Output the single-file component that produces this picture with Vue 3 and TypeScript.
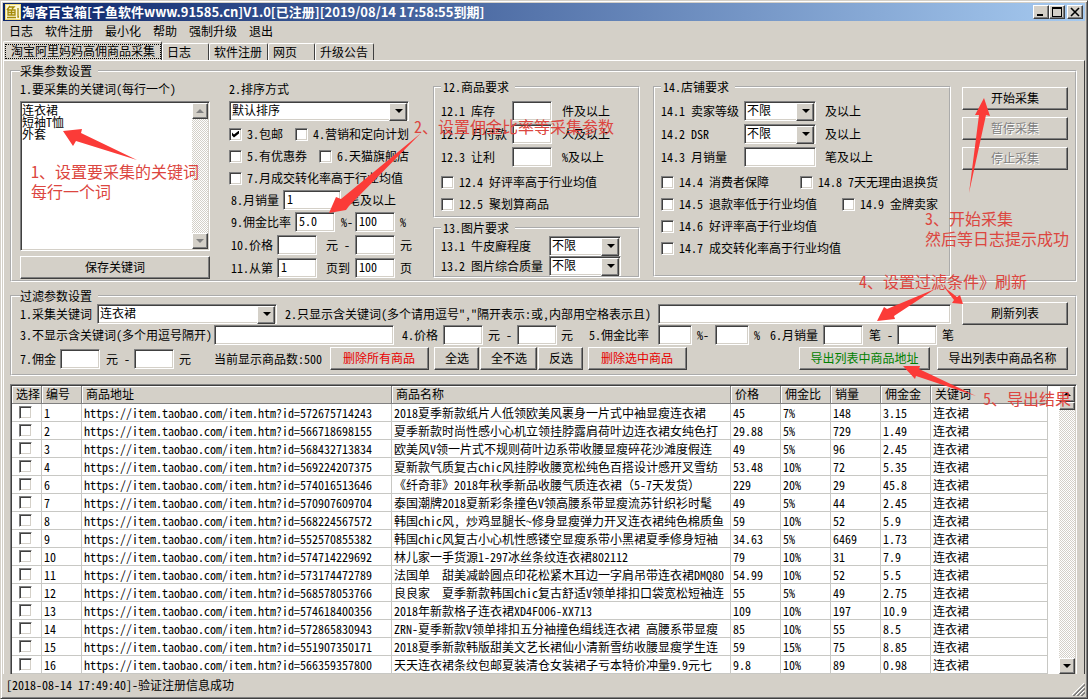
<script setup lang="ts">
import { ref } from 'vue'

interface Product {
  no: number
  id: string
  name: string
  price: string
  rate: string
  sales: string
  commission: string
  checked: boolean
}

const menus = ['日志', '软件注册', '最小化', '帮助', '强制升级', '退出']
const tabs = ['淘宝阿里妈妈高佣商品采集', '日志', '软件注册', '网页', '升级公告']
const activeTab = ref(0)

const keywords = ref('连衣裙\n短袖T恤\n外套')
const limits = ['不限']

const raw: [number, string, string, string, string, string, string][] = [
  [1, '572675714243', '2018夏季新款纸片人低领欧美风裹身一片式中袖显瘦连衣裙', '45', '7%', '148', '3.15'],
  [2, '566718698155', '夏季新款时尚性感小心机立领挂脖露肩荷叶边连衣裙女纯色打', '29.88', '5%', '729', '1.49'],
  [3, '568432713834', '欧美风V领一片式不规则荷叶边系带收腰显瘦碎花沙滩度假连', '49', '5%', '96', '2.45'],
  [4, '569224207375', '夏新款气质复古chic风挂脖收腰宽松纯色百搭设计感开叉雪纺', '53.48', '10%', '72', '5.35'],
  [6, '574016513646', '《纤奇菲》2018年秋季新品收腰气质连衣裙（5-7天发货）', '229', '20%', '29', '45.8'],
  [7, '570907609704', '泰国潮牌2018夏新彩条撞色V领高腰系带显瘦流苏针织衫时髦', '49', '5%', '44', '2.45'],
  [8, '568224567572', '韩国chic风, 炒鸡显腿长~修身显瘦弹力开叉连衣裙纯色棉质鱼', '59', '10%', '52', '5.9'],
  [9, '552570855382', '韩国chic风复古小心机性感镂空显瘦系带小黑裙夏季修身短袖', '34.63', '5%', '6469', '1.73'],
  [10, '574714229692', '林儿家一手货源1-297冰丝条纹连衣裙802112', '79', '10%', '31', '7.9'],
  [11, '573174472789', '法国单  甜美减龄圆点印花松紧木耳边一字肩吊带连衣裙DMQ80', '54.99', '10%', '52', '5.5'],
  [12, '568578053766', '良良家  夏季新款韩国chic复古舒适V领单排扣口袋宽松短袖连', '55', '5%', '49', '2.75'],
  [13, '574618400356', '2018年新款格子连衣裙XD4F006-XX713', '109', '10%', '197', '10.9'],
  [14, '572865830943', 'ZRN-夏季新款V领单排扣五分袖撞色缉线连衣裙 高腰系带显瘦', '85', '10%', '55', '8.5'],
  [15, '551907350171', '2018夏季新款韩版甜美文艺长裙仙小清新雪纺收腰显瘦学生连', '59', '15%', '75', '8.85'],
  [16, '566359357800', '天天连衣裙条纹包邮夏装清仓女装裙子亏本特价冲量9.9元七', '9.8', '10%', '89', '0.98'],
]
const products = ref<Product[]>(
  raw.map(([no, id, name, price, rate, sales, commission]) => ({
    no, id, name, price, rate, sales, commission, checked: false,
  })),
)
const headers = ['选择', '编号', '商品地址', '商品名称', '价格', '佣金比', '销量', '佣金金', '关键词']

// Full-width brackets keep their own width, apart from the half-width Latin text.
function pieces(name: string): { text: string; full: boolean }[] {
  return name
    .split(/([（）])/)
    .filter(Boolean)
    .map((text) => ({ text, full: /[（）]/.test(text) }))
}

function setAll(value: boolean) {
  products.value.forEach((p) => (p.checked = value))
}
function invert() {
  products.value.forEach((p) => (p.checked = !p.checked))
}
</script>

<template>
  <div class="window">
    <header class="titlebar">
      <svg class="app-icon" viewBox="0 0 16 16" aria-hidden="true">
        <rect width="16" height="16" fill="#f3dc74" />
        <rect x="1" y="1" width="14" height="14" fill="#fdf8d8" />
        <path d="M5 2 L2 6 M4 3 H9 L7 5 M3 6 H10 V11 H3 Z M3 8.5 H10 M6.5 6 V11 M2 13.5 H11 M13 4 V13 H14" fill="none" stroke="#a58a08" stroke-width="1.3" />
      </svg>
      <h1>淘客百宝箱[千鱼软件www.91585.cn]V1.0[已注册][2019/08/14 17:58:55到期]</h1>
      <div class="winbtns">
        <button type="button" aria-label="最小化窗口"><svg viewBox="0 0 12 10"><path d="M2 7h6v2H2z" /></svg></button>
        <button type="button" aria-label="最大化"><svg viewBox="0 0 12 10"><path d="M1 0h10v10H1zM2 2v7h8V2z" fill-rule="evenodd" /></svg></button>
        <button type="button" class="close" aria-label="关闭"><svg viewBox="0 0 12 10"><path d="M2 1L10 9M10 1L2 9" stroke="#000" stroke-width="1.6" /></svg></button>
      </div>
    </header>

    <nav class="menu">
      <button v-for="m in menus" :key="m" type="button">{{ m }}</button>
    </nav>

    <div class="tabs" role="tablist">
      <button
        v-for="(t, i) in tabs"
        :key="t"
        type="button"
        role="tab"
        :class="['tab', { active: i === activeTab, short: t.length === 2 }]"
        :aria-selected="i === activeTab"
        @click="activeTab = i"
      ><span>{{ t }}</span></button>
    </div>

    <main class="panel">
      <fieldset class="group outer collect">
        <legend>采集参数设置</legend>

        <div class="col words">
          <label class="head" for="words">1.要采集的关键词(每行一个)</label>
          <div class="memo sunken">
            <textarea id="words" v-model="keywords" spellcheck="false"></textarea>
            <div class="scroll off" aria-hidden="true"><i class="arrow up"></i><i class="arrow down"></i></div>
          </div>
          <button type="button" class="btn save">保存关键词</button>
        </div>

        <div class="col sort">
          <label class="head" for="sort">2.排序方式</label>
          <span class="combo"><select id="sort"><option>默认排序</option></select></span>
          <div class="line checks">
            <label class="check"><input type="checkbox" checked />3.包邮</label>
            <label class="check"><input type="checkbox" />4.营销和定向计划</label>
          </div>
          <div class="line checks">
            <label class="check"><input type="checkbox" />5.有优惠券</label>
            <label class="check"><input type="checkbox" />6.天猫旗舰店</label>
          </div>
          <div class="line"><label class="check"><input type="checkbox" />7.月成交转化率高于行业均值</label></div>
          <div class="line sales">
            <label for="s8">8.月销量</label><input id="s8" class="box w58" value="1" /><span>笔及以上</span>
          </div>
          <div class="line range wide">
            <label for="s9">9.佣金比率</label><input id="s9" class="box w40" value="5.0" /><span>%-</span>
            <input class="box w40" value="100" aria-label="佣金比率上限" /><span>%</span>
          </div>
          <div class="line range tall">
            <label for="s10">10.价格</label><input id="s10" class="box w40" /><span>元 -</span>
            <input class="box w40" aria-label="价格上限" /><span>元</span>
          </div>
          <div class="line range tall">
            <label for="s11">11.从第</label><input id="s11" class="box w40" value="1" /><span>页到</span>
            <input class="box w40" value="100" aria-label="结束页" /><span>页</span>
          </div>
        </div>

        <div class="col needs">
          <fieldset class="group goods">
            <legend>12.商品要求</legend>
            <div class="line g12"><label for="g1">12.1 库存</label><input id="g1" class="box w40" /><span>件及以上</span></div>
            <div class="line g12"><label for="g2">12.2 月付款</label><input id="g2" class="box w40" /><span>人及以上</span></div>
            <div class="line g12"><label for="g3">12.3 让利</label><input id="g3" class="box w40" /><span>%及以上</span></div>
            <div class="line spaced"><label class="check"><input type="checkbox" />12.4 好评率高于行业均值</label></div>
            <div class="line"><label class="check"><input type="checkbox" />12.5 聚划算商品</label></div>
          </fieldset>
          <fieldset class="group pics">
            <legend>13.图片要求</legend>
            <div class="line g13">
              <label for="p1">13.1 牛皮廯程度</label>
              <span class="combo"><select id="p1"><option v-for="l in limits" :key="l">{{ l }}</option></select></span>
            </div>
            <div class="line g13">
              <label for="p2">13.2 图片综合质量</label>
              <span class="combo"><select id="p2"><option v-for="l in limits" :key="l">{{ l }}</option></select></span>
            </div>
          </fieldset>
        </div>

        <fieldset class="group shop">
          <legend>14.店铺要求</legend>
          <div class="line g14">
            <label for="h1">14.1 卖家等级</label>
            <span class="combo"><select id="h1"><option v-for="l in limits" :key="l">{{ l }}</option></select></span><span>及以上</span>
          </div>
          <div class="line g14">
            <label for="h2">14.2 DSR</label>
            <span class="combo"><select id="h2"><option v-for="l in limits" :key="l">{{ l }}</option></select></span><span>及以上</span>
          </div>
          <div class="line g14"><label for="h3">14.3 月销量</label><input id="h3" class="box w72" /><span>笔及以上</span></div>
          <div class="line spaced pair">
            <label class="check"><input type="checkbox" />14.4 消费者保障</label>
            <label class="check"><input type="checkbox" />14.8 7天无理由退换货</label>
          </div>
          <div class="line pair">
            <label class="check"><input type="checkbox" />14.5 退款率低于行业均值</label>
            <label class="check"><input type="checkbox" />14.9 金牌卖家</label>
          </div>
          <div class="line"><label class="check"><input type="checkbox" />14.6 好评率高于行业均值</label></div>
          <div class="line"><label class="check"><input type="checkbox" />14.7 成交转化率高于行业均值</label></div>
        </fieldset>

        <div class="actions">
          <button type="button" class="btn">开始采集</button>
          <button type="button" class="btn" disabled>暂停采集</button>
          <button type="button" class="btn" disabled>停止采集</button>
        </div>
      </fieldset>

      <fieldset class="group outer filter">
        <legend>过滤参数设置</legend>
        <div class="f1">
          <label for="f1">1.采集关键词</label>
          <span class="combo"><select id="f1"><option>连衣裙</option></select></span>
          <label for="f2">2.只显示含关键词(多个请用逗号","隔开表示:或,内部用空格表示且)</label>
          <input id="f2" class="box grow" />
          <button type="button" class="btn">刷新列表</button>
        </div>
        <div class="f2">
          <label for="f3">3.不显示含关键词(多个用逗号隔开)</label><input id="f3" class="box w180" />
          <label for="f4">4.价格</label><input id="f4" class="box w40" /><span>元 -</span>
          <input class="box w40" aria-label="价格上限" /><span>元</span>
          <label for="f5">5.佣金比率</label><input id="f5" class="box w34" /><span>%-</span>
          <input class="box w34" aria-label="佣金比率上限" /><span>%</span>
          <label for="f6">6.月销量</label><input id="f6" class="box w40" /><span>笔 -</span>
          <input class="box w40" aria-label="月销量上限" /><span>笔</span>
        </div>
        <div class="f3">
          <label for="f7">7.佣金</label><input id="f7" class="box w40" /><span>元 -</span>
          <input class="box w40" aria-label="佣金上限" /><span>元</span>
          <span>当前显示商品数:500</span>
          <div class="bulk">
            <button type="button" class="btn danger">删除所有商品</button>
            <div class="picks">
              <button type="button" class="btn" @click="setAll(true)">全选</button>
              <button type="button" class="btn" @click="setAll(false)">全不选</button>
              <button type="button" class="btn" @click="invert">反选</button>
            </div>
            <button type="button" class="btn danger">删除选中商品</button>
          </div>
          <div class="exports">
            <button type="button" class="btn ok">导出列表中商品地址</button>
            <button type="button" class="btn">导出列表中商品名称</button>
          </div>
        </div>
      </fieldset>

      <section class="list">
        <div class="table-area">
          <table>
            <colgroup>
              <col class="c-sel" /><col class="c-no" /><col class="c-url" /><col /><col class="c-num" />
              <col class="c-num" /><col class="c-num" /><col class="c-num" /><col class="c-key" />
            </colgroup>
            <thead>
              <tr><th v-for="h in headers" :key="h" scope="col">{{ h }}</th></tr>
            </thead>
            <tbody>
              <tr v-for="p in products" :key="p.no">
                <td class="sel"><input v-model="p.checked" type="checkbox" :aria-label="`选择 ${p.no}`" /></td>
                <td>{{ p.no }}</td>
                <td>https://item.taobao.com/item.htm?id={{ p.id }}</td>
                <td><span v-for="(s, i) in pieces(p.name)" :key="i" :class="{ full: s.full }">{{ s.text }}</span></td>
                <td>{{ p.price }}</td>
                <td>{{ p.rate }}</td>
                <td>{{ p.sales }}</td>
                <td>{{ p.commission }}</td>
                <td>连衣裙</td>
              </tr>
            </tbody>
          </table>
        </div>
        <div class="scroll" aria-hidden="true"><i class="arrow up"></i><i class="thumb"></i><i class="arrow down"></i></div>
      </section>
    </main>

    <footer class="status">
      <span>[2018-08-14 17:49:40]-验证注册信息成功</span>
      <svg class="grip" viewBox="0 0 13 13" aria-hidden="true">
        <path d="M0 12L12 0M4 12L12 4M8 12L12 8" stroke="#fff" />
        <path d="M1 13L13 1M2 13L13 2M5 13L13 5M6 13L13 6M9 13L13 9M10 13L13 10" stroke="#808080" />
      </svg>
    </footer>

    <svg class="arrows" width="1088" height="699" viewBox="0 0 1088 699" aria-hidden="true">
      <path d="M63 131L82 129L81 133L137 160L76 141L73 146Z" />
      <path d="M329 213L336 197L341 199L421 133L349 206L346 210Z" />
      <path d="M984 98L990 116L986 115L969 193L979 115L975 115Z" />
      <path d="M877 321L884 307L887 309L935 289L894 316L895 319Z" />
      <path d="M963 304L960 295L957 297L944 287L954 300L952 303Z" />
      <path d="M903 366L920 366L919 369L976 396L916 376L915 379Z" />
    </svg>
    <p class="note n1">1、设置要采集的关键词<br />每行一个词</p>
    <p class="note n2">2、设置佣金比率等采集参数</p>
    <p class="note n3">3、开始采集<br />然后等日志提示成功</p>
    <p class="note n4">4、设置过滤条件》刷新</p>
    <p class="note n5">5、导出结果</p>
  </div>
</template>

<style>
html,
body,
#app {
  height: 100%;
}
body {
  margin: 0;
}
</style>

<style scoped>
.window,
.window * {
  box-sizing: border-box;
}
.window {
  position: relative;
  display: flex;
  flex-direction: column;
  height: 100%;
  padding: 2px;
  overflow: hidden;
  background: #d4d0c8;
  border: 1px solid;
  border-color: #d4d0c8 #404040 #404040 #d4d0c8;
  box-shadow: inset 1px 1px #fff, inset -1px -1px #808080;
  color: #000;
  font-family: "Noto Sans CJK SC", sans-serif;
  font-size: 12px;
  line-height: 14px;
  font-feature-settings: "hwid";
  white-space: pre;
}
button,
input,
select,
textarea {
  margin: 0;
  padding: 0;
  border-radius: 0;
  color: inherit;
  font: inherit;
  font-feature-settings: inherit;
  outline: none;
}

/* title bar */
.titlebar {
  display: flex;
  flex: none;
  align-items: center;
  height: 18px;
  padding: 0 2px;
  background: linear-gradient(90deg, #0a246a, #a6caf0);
  color: #fff;
}
.app-icon {
  width: 16px;
  height: 16px;
}
h1 {
  margin: 0 0 0 1px;
  font-size: 13px;
  line-height: 18px;
  font-weight: 700;
  font-feature-settings: normal;
}
.winbtns {
  display: flex;
  margin-left: auto;
}
.winbtns button {
  display: grid;
  place-items: center;
  width: 16px;
  height: 14px;
  background: #d4d0c8;
  border: 1px solid;
  border-color: #fff #404040 #404040 #fff;
  box-shadow: inset -1px -1px #808080;
}
.winbtns svg {
  width: 12px;
  height: 10px;
}
.winbtns .close {
  margin-left: 2px;
}

/* menu and tabs */
.menu {
  display: flex;
  flex: none;
  gap: 12px;
  height: 20px;
  padding-left: 6px;
}
.menu button {
  background: none;
  border: 0;
}
.tabs {
  display: flex;
  flex: none;
  align-items: flex-end;
  height: 19px;
}
.tab {
  height: 17px;
  padding: 0 5px 0 4px;
  background: none;
  border: 0;
  border-top: 1px solid #fff;
  border-left: 1px solid #fff;
  border-right: 1px solid #404040;
  border-radius: 2px 2px 0 0;
  text-align: left;
}
.tab.short {
  width: 47px;
}
.tab.active {
  height: 20px;
  margin-bottom: -1px;
  padding: 1px 0 2px 1px;
  background: #d4d0c8;
}
.tab.active span {
  display: block;
  height: 15px;
  padding: 0 5px;
  border: 1px dotted #000;
  line-height: 12px;
}
.panel {
  display: flex;
  flex: 1;
  flex-direction: column;
  min-height: 0;
  padding: 4px 7px 0 6px;
  border-top: 1px solid #fff;
  border-left: 1px solid #fff;
  border-right: 1px solid #404040;
}

/* groups */
.group {
  min-width: 0;
  margin: 0;
  padding: 0;
  border: 2px groove #fff;
}
.group legend {
  padding: 0 6px 0 2px;
  line-height: 12px;
}
.outer > legend {
  padding-left: 0;
}
.collect {
  display: grid;
  flex: none;
  grid-template-columns: 209px 204px 220px minmax(298px, 1fr) 106px;
  padding: 0 7px 1px 8px;
}
.col {
  display: flex;
  flex-direction: column;
}
.head {
  line-height: 24px;
}
.words {
  width: 190px;
}
.sunken,
.box,
.combo,
input[type="checkbox"] {
  background: #fff;
  border: 1px solid;
  border-color: #808080 #fff #fff #808080;
  box-shadow: inset 1px 1px #404040, inset -1px -1px #d4d0c8;
}
.memo {
  display: flex;
  height: 150px;
  padding: 1px;
}
.memo textarea {
  flex: 1;
  min-width: 0;
  padding: 1px 0 0;
  overflow: hidden;
  resize: none;
  background: none;
  border: 0;
  line-height: 12px;
}
.btn {
  height: 23px;
  padding-bottom: 1px;
  background: #d4d0c8;
  border: 1px solid;
  border-color: #fff #404040 #404040 #fff;
  box-shadow: inset -1px -1px #808080;
  line-height: 14px;
}
.btn:disabled {
  color: #808080;
  text-shadow: 1px 1px #fff;
}
.save {
  margin-top: 5px;
}
.line {
  display: flex;
  align-items: center;
  height: 22px;
}
.check {
  display: flex;
  align-items: center;
  gap: 5px;
}
input[type="checkbox"] {
  position: relative;
  flex: none;
  width: 13px;
  height: 13px;
  appearance: none;
}
input[type="checkbox"]:checked::after {
  position: absolute;
  top: 2px;
  left: 2px;
  width: 7px;
  height: 7px;
  background: #000;
  clip-path: polygon(0 28%, 28% 57%, 100% 0, 100% 43%, 28% 100%, 0 71%);
  content: "";
}
.box {
  height: 20px;
  padding: 0 2px 3px 3px;
}
.w34 { width: 34px; }
.w40 { width: 40px; }
.w58 { width: 58px; }
.w72 { width: 72px; }
.w180 { width: 180px; }
.combo {
  position: relative;
  display: block;
  width: 72px;
  height: 20px;
  padding: 1px;
}
.combo select {
  display: block;
  width: 100%;
  height: 16px;
  padding: 0 18px 2px 1px;
  appearance: none;
  background: none;
  border: 0;
  line-height: 14px;
}
.combo::before {
  position: absolute;
  top: 1px;
  right: 1px;
  width: 16px;
  height: 16px;
  background: #d4d0c8;
  border: 1px solid;
  border-color: #fff #404040 #404040 #fff;
  box-shadow: inset -1px -1px #808080;
  content: "";
  pointer-events: none;
}
.combo::after {
  position: absolute;
  top: 7px;
  right: 5px;
  border: 4px solid transparent;
  border-top-color: #000;
  border-bottom: 0;
  content: "";
  pointer-events: none;
}
.sort > .combo {
  width: 180px;
  margin-bottom: 2px;
}
.checks { gap: 12px; }
.sales,
.range {
  display: grid;
  padding-left: 2px;
}
.sales { grid-template-columns: 52px 65px auto; }
.range { grid-template-columns: 46px 49px 29px 45px auto; }
.range.wide { grid-template-columns: 64px 46px 14px 45px auto; }
.tall { height: 23px; }
.needs { width: 207px; }
.goods {
  margin-top: 4px;
  padding: 6px 0 1px 6px;
}
.pics {
  margin-top: 4px;
  padding: 2px 0 0 6px;
}
.g12,
.g14 {
  display: grid;
  height: 23px;
}
.g12 { grid-template-columns: 71px 50px auto; }
.g13 {
  display: grid;
  grid-template-columns: 108px auto;
  height: 20px;
}
.g14 { grid-template-columns: 83px 81px auto; }
.spaced { margin-top: 3px; }
.shop {
  margin: 4px 11px 2px 0;
  padding: 6px 11px 0 6px;
}
.pair { justify-content: space-between; }
.actions {
  display: flex;
  flex-direction: column;
  gap: 7px;
  padding-top: 10px;
}

/* filter */
.filter {
  flex: none;
  margin-top: 8px;
  padding: 0 7px 5px 8px;
}
.f1,
.f2,
.f3 {
  display: grid;
  align-items: center;
}
.f1 {
  grid-template-columns: 77px 188px 373px 1fr 106px;
  height: 20px;
}
.f1 .combo { width: 180px; }
.f1 .grow {
  width: auto;
  min-width: 0;
  margin-right: 11px;
}
.f2 {
  grid-template-columns: 194px 188px 41px 45px 29px 44px 28px 69px 39px 18px 39px 16px 53px 46px 28px 45px auto;
  height: 25px;
}
.f3 {
  grid-template-columns: 40px 46px 28px 45px 35px 116px auto 1fr;
  height: 22px;
}
.bulk {
  display: flex;
  gap: 5px;
}
.picks {
  display: flex;
  gap: 1px;
}
.bulk .btn { padding: 0 9px 1px 10px; }
.bulk .danger {
  padding: 0 13px 1px 12px;
  color: #e80000;
}
.exports {
  display: flex;
  gap: 7px;
  justify-content: flex-end;
}
.exports .btn { width: 131px; }
.ok { color: #008000; }

/* product list */
.list {
  display: flex;
  flex: 1;
  min-height: 0;
  margin-top: 8px;
  padding: 1px 1px 0;
  overflow: hidden;
  background: #fff;
  border: 1px solid;
  border-color: #808080 #fff #fff #808080;
  border-bottom: 0;
  box-shadow: inset 1px 1px #404040, inset -1px 0 #d4d0c8;
}
.table-area {
  flex: 1;
  min-width: 0;
  overflow: hidden;
}
table {
  width: calc(100% - 11px);
  border-spacing: 0;
  table-layout: fixed;
}
.c-sel { width: 30px; }
.c-no { width: 40px; }
.c-url { width: 310px; }
.c-num { width: 50px; }
.c-key { width: 117px; }
th {
  height: 18px;
  padding: 0 0 2px 4px;
  background: #d4d0c8;
  border-bottom: 1px solid #808080;
  border-right: 1px solid #808080;
  box-shadow: inset 1px 1px #fff;
  font-weight: 400;
  line-height: 14px;
  text-align: left;
}
td {
  height: 18px;
  padding: 0 0 0 2px;
  overflow: hidden;
  border-right: 1px solid #c8c8c4;
  border-bottom: 1px solid #c8c8c4;
  line-height: 14px;
}
td.sel {
  padding-left: 7px;
  line-height: 0;
}
.full {
  font-feature-settings: normal;
}
.scroll {
  display: flex;
  flex: none;
  flex-direction: column;
  width: 16px;
  background: repeating-conic-gradient(#d4d0c8 0 25%, #fff 0 50%) 0 0 / 2px 2px;
}
.arrow,
.thumb {
  display: grid;
  flex: none;
  place-items: center;
  height: 16px;
  background: #d4d0c8;
  border: 1px solid;
  border-color: #fff #404040 #404040 #fff;
  box-shadow: inset -1px -1px #808080;
}
.thumb { height: 8px; }
.arrow.down { margin-top: auto; }
.arrow::after {
  border: 4px solid transparent;
  content: "";
}
.up::after {
  border-top: 0;
  border-bottom-color: #000;
}
.down::after {
  border-bottom: 0;
  border-top-color: #000;
}
.off .up::after { border-bottom-color: #808080; }
.off .down::after { border-top-color: #808080; }

/* status bar */
.status {
  display: flex;
  flex: none;
  align-items: center;
  justify-content: space-between;
  height: 22px;
  padding-left: 3px;
}
.grip {
  align-self: flex-end;
  width: 13px;
  height: 13px;
}

/* guide notes over the form */
.arrows {
  position: absolute;
  top: -1px;
  left: -1px;
  fill: #fb3b38;
  pointer-events: none;
}
.note {
  position: absolute;
  margin: 0;
  color: #dc4640;
  font-size: 16px;
  line-height: 20px;
  pointer-events: none;
}
.n1 { top: 160px; left: 30px; }
.n2 { top: 115px; left: 413px; }
.n3 { top: 207px; left: 924px; }
.n4 { top: 270px; left: 858px; }
.n5 { top: 387px; left: 982px; }
</style>
